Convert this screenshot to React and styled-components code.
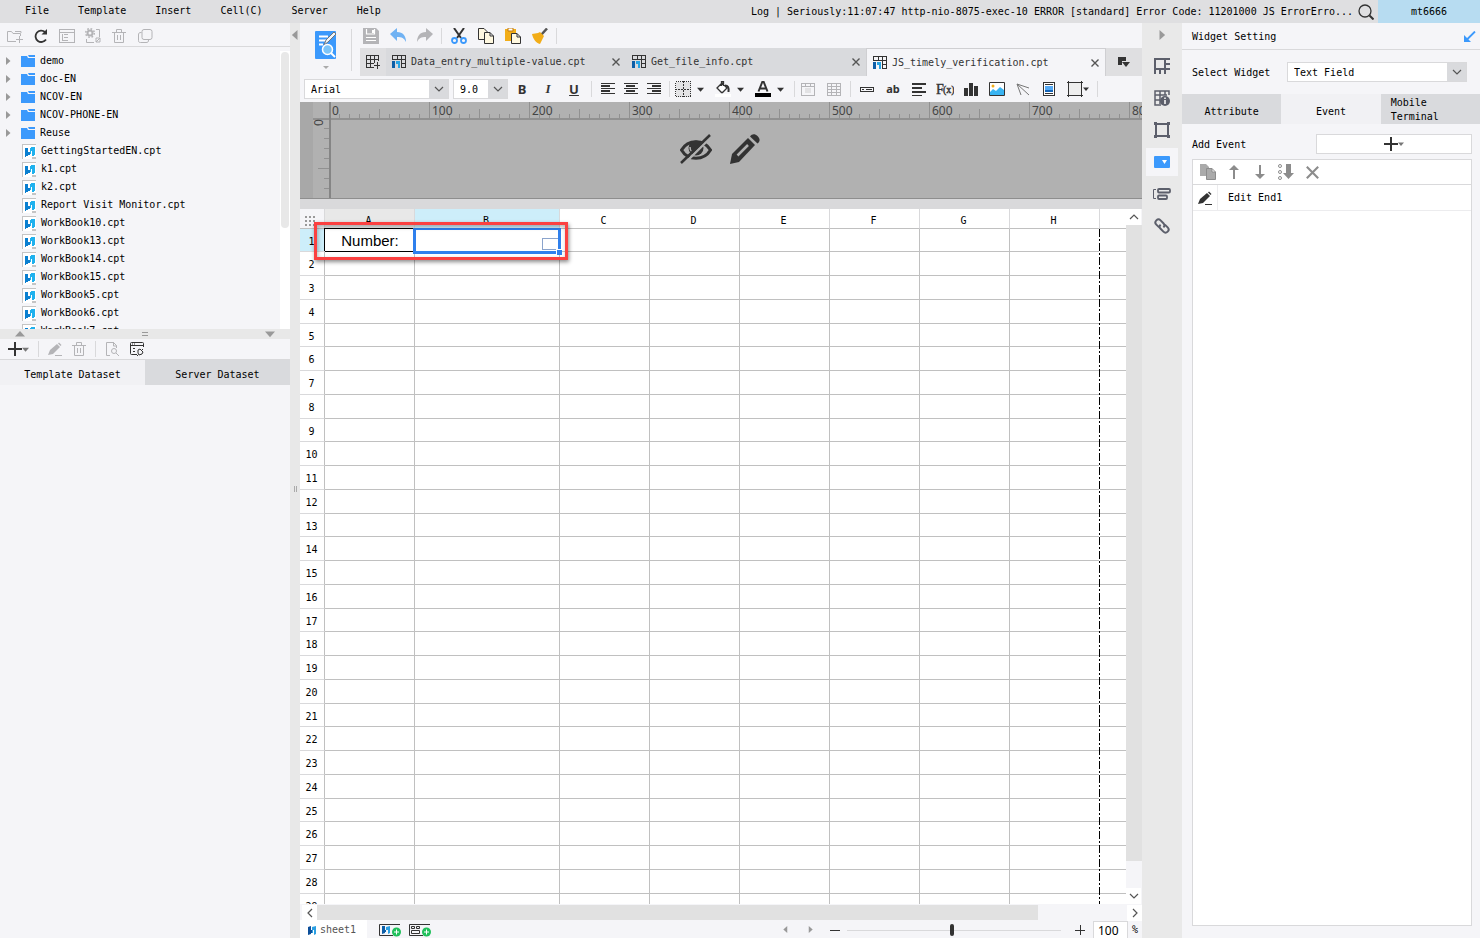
import React from 'react';

import styled, { createGlobalStyle, css } from 'styled-components';

const mono = '"DejaVu Sans Mono", "Liberation Mono", monospace';
const sans = '"Noto Sans", "Open Sans", sans-serif';

const panel = '#f5f5f8';
const bar = '#dfdfe1';
const line = '#d9d9db';
const tab = '#d9dadd';
const ink = '#333';
const blue = '#3b99fc';

const GlobalStyle = createGlobalStyle`
  * {
    box-sizing: border-box;
  }
  body {
    margin: 0;
    font: 10px/18px ${mono};
    color: #000;
    background: ${panel};
  }
  button, input, select {
    margin: 0;
    padding: 0;
    border: 0;
    border-radius: 0;
    background: none;
    font: inherit;
    color: inherit;
    outline: none;
  }
  svg {
    display: block;
    flex: none;
  }
`;

const Page = styled.div`
  height: 100vh;
  display: flex;
  flex-direction: column;
  overflow: hidden;
`;

const Header = styled.header`
  height: 23px;
  flex: none;
  display: flex;
  background: ${bar};
`;

const Menu = styled.nav`
  display: flex;
  gap: 29px;
  padding-left: 25px;
  height: 21px;
`;

const Log = styled.div`
  flex: 1;
  min-width: 0;
  padding-right: 5px;
  line-height: 23px;
  text-align: right;
  white-space: nowrap;
  overflow: hidden;
`;

const SearchButton = styled.button`
  width: 20px;
`;

const User = styled.button`
  width: 102px;
  background: #b7dcf1;
`;

const Body = styled.div`
  flex: 1;
  min-height: 0;
  display: flex;
`;

const Left = styled.aside`
  width: 290px;
  flex: none;
  display: flex;
  flex-direction: column;
  background: ${panel};
`;

const LeftTools = styled.div`
  height: 24px;
  flex: none;
  display: flex;
  align-items: center;
  padding: 2px 0 0 2px;
  border-bottom: 1px solid ${line};
`;

const IconButton = styled.button`
  width: ${props => props.$w || 26}px;
  height: 20px;
  flex: none;
  display: flex;
  align-items: center;
  align-self: center;
  justify-content: center;
`;

const TreeWrap = styled.div`
  height: 282px;
  flex: none;
  display: flex;
  overflow: hidden;
`;

const Tree = styled.ul`
  flex: 1;
  margin: 0;
  padding: 5px 0 0 4px;
  list-style: none;
`;

const TreeRow = styled.li`
  height: 18px;
  display: flex;
  align-items: center;
  gap: 5px;
  white-space: nowrap;
`;

const TreeArrow = styled.span`
  width: 12px;
  height: 9px;
`;

const TreeTrack = styled.div`
  width: 10px;
  margin-top: 4px;
  padding: 1px;
  background: #fff;
`;

const TreeThumb = styled.div`
  height: 176px;
  border-radius: 4px;
  background: #e8e8e8;
`;

const HSplit = styled.div`
  height: 10px;
  flex: none;
  display: flex;
  align-items: center;
  justify-content: space-between;
  padding: 0 15px;
  background: #e8e8e8;
`;

const DataTools = styled.div`
  height: 21px;
  flex: none;
  display: flex;
  align-items: center;
  padding-left: 3px;
  border-bottom: 1px solid ${line};
`;

const Tabs = styled.div`
  display: grid;
  grid-auto-flow: column;
  grid-auto-columns: minmax(0, 1fr);
  flex: none;
  height: ${props => props.$h}px;
`;

const Tab = styled.button`
  padding: ${props => props.$wrap ? '2px 20px 0 10px' : '4px 0 0'};
  line-height: ${props => props.$wrap ? 14 : 15}px;
  text-align: ${props => props.$wrap ? 'left' : 'center'};
  background: ${props => props.$active ? '#f1f1f4' : tab};
`;

const VSplit = styled.div`
  width: 10px;
  flex: none;
  display: flex;
  flex-direction: column;
  align-items: center;
  padding-top: 7px;
  background: #e8e8e8;
`;

const Grip = styled.div`
  width: 3px;
  height: 6px;
  margin: auto;
  border: solid #aaa;
  border-width: 0 1px;
`;

const Center = styled.main`
  flex: 1;
  min-width: 0;
  display: flex;
  flex-direction: column;
  background: ${panel};
`;

const Top = styled.div`
  height: 53px;
  flex: none;
  display: flex;
`;

const Logo = styled.button`
  width: 52px;
  height: 42px;
  margin: 6px 5px 0 0;
  padding-left: 14px;
  border-right: 1px solid ${line};
`;

const TopMain = styled.div`
  flex: 1;
  min-width: 0;
  display: flex;
  flex-direction: column;
`;

const MainTools = styled.div`
  height: 25px;
  display: flex;
  align-items: center;
`;

const Divider = styled.span`
  width: 1px;
  height: 16px;
  flex: none;
  margin: 0 ${props => props.$gap || 0}px;
  background: ${line};
`;

const FileTabs = styled.div`
  height: 28px;
  display: flex;
  margin-left: 3px;
  background: ${bar};
`;

const FileTab = styled.div`
  width: 240px;
  min-width: 0;
  display: flex;
  align-items: center;
  gap: 5px;
  padding: 0 6px;
  color: ${ink};
  background: ${props => props.$active ? panel : tab};
  ${props => props.$active && css`
    border: solid #cfcfd2;
    border-width: 1px 1px 0;
  `}
`;

const FileName = styled.span`
  flex: 1;
  white-space: nowrap;
`;

const FormatBar = styled.div`
  height: 26px;
  flex: none;
  display: flex;
  align-items: center;
  padding-left: 4px;
  overflow: hidden;
`;

const SelectBox = styled.div`
  width: ${props => props.$w}px;
  height: 20px;
  flex: none;
  display: grid;
  margin-right: ${props => props.$mr || 0}px;
  border: 1px solid ${line};
  background: #fff;
  select {
    grid-area: 1 / 1;
    width: 100%;
    padding: 1px 20px 0 6px;
    line-height: 17px;
    appearance: none;
  }
  span {
    grid-area: 1 / 1;
    justify-self: end;
    width: 19px;
    display: grid;
    place-items: center;
    background: ${tab};
    pointer-events: none;
  }
`;

const Letter = styled(IconButton)`
  font: bold ${props => props.$small ? 11 : 13}px/18px ${sans};
  color: ${ink};
  text-decoration: ${props => props.$under ? 'underline' : 'none'};
  ${props => props.$italic && css`
    font-family: "Liberation Serif", serif;
    font-style: italic;
  `}
`;

const SplitButton = styled.button`
  width: ${props => props.$tight ? 35 : 40}px;
  flex: none;
  display: flex;
  align-items: center;
  gap: ${props => props.$tight ? 0 : 6}px;
  padding-left: ${props => props.$tight ? 5 : 1}px;
`;

const Design = styled.div`
  height: 97px;
  flex: none;
  display: grid;
  background: #b1b1b1;
  border-bottom: 1px solid #8e8e8e;
  > * {
    grid-area: 1 / 1;
  }
`;

const DesignActions = styled.div`
  display: flex;
  align-items: center;
  justify-content: center;
  gap: 18px;
  padding: 0 2px 2px 0;
`;

const Band = styled.div`
  height: 10px;
  flex: none;
  background: #d9d9db;
`;

const SheetArea = styled.div`
  flex: 1;
  min-height: 0;
  display: flex;
`;

const SheetView = styled.div`
  position: relative;
  flex: 1;
  min-width: 0;
  overflow: hidden;
  background: #fff;
`;

const Sheet = styled.table`
  width: 100%;
  table-layout: fixed;
  border-collapse: separate;
  border-spacing: 0;
  th, td {
    padding: 0;
    font-weight: normal;
    border: solid #c0c0c0;
    border-width: 0 1px 1px 0;
  }
  th:last-child, td:last-child {
    border-right: 0;
  }
`;

const Row = styled.tr`
  height: ${props => props.$h}px;
`;

const ColHead = styled.th`
  height: 20px;
  line-height: 15px;
  background: ${props => props.$bg || '#fff'};
  && {
    border-right-color: ${line};
    padding: 4px 2px 0 0;
  }
`;

const RowHead = styled.th`
  background: ${props => props.$bg || '#fff'};
  && {
    border-bottom-color: ${line};
    padding: 3px 1px 0 0;
  }
`;

const NumberCell = styled.td`
  font: 15px/18px "Liberation Sans", Arial, sans-serif;
  text-align: center;
  box-shadow: -1px -1px 0 #000;
  && {
    padding: 2px 0 0 1px;
    border-color: #000;
  }
`;

const SelectedCell = styled.td`
  position: relative;
`;

const Selection = styled.div`
  position: absolute;
  inset: -1px -2px -3px -2px;
  border: 3px solid #2f80ed;
  border-width: 2px 3px 3px 3px;
  &::before {
    content: '';
    position: absolute;
    right: 0;
    top: 8px;
    width: 15px;
    height: 10px;
    border: 1px solid #8ba4cc;
    border-right: 0;
  }
  &::after {
    content: '';
    position: absolute;
    right: -4px;
    bottom: -4px;
    width: 5px;
    height: 5px;
    background: #2f80ed;
    box-shadow: -1px -1px 0 #fff;
  }
`;

const PageBreak = styled.div`
  position: absolute;
  top: 20px;
  bottom: 0;
  left: 799px;
  width: 1px;
  background: repeating-linear-gradient(#000 0 8px, #fff 8px 10px, #000 10px 12px, #fff 12px 14px);
`;

const Callout = styled.div`
  position: absolute;
  top: 13px;
  left: 14px;
  width: 254px;
  height: 38px;
  border: 3px solid #fb4040;
  box-shadow: 1px 2px 4px rgba(0, 0, 0, 0.45), inset 1px 2px 4px rgba(0, 0, 0, 0.3);
`;

const VScroll = styled.div`
  width: 16px;
  flex: none;
  display: flex;
  flex-direction: column;
`;

const HScroll = styled.div`
  height: 16px;
  flex: none;
  display: flex;
  padding: 1px 0 0 2px;
`;

const ScrollButton = styled.button`
  width: 15px;
  height: 16px;
  flex: none;
  display: grid;
  place-items: center;
  background: #fff;
`;

const ScrollTrack = styled.div`
  flex: 1;
  display: flex;
  flex-direction: ${props => props.$vertical ? 'column' : 'row'};
  &::before {
    content: '';
    flex: 0 0 ${props => props.$size}%;
    background: #e1e1e1;
  }
`;

const StatusBar = styled.footer`
  height: 18px;
  flex: none;
  display: flex;
  align-items: center;
`;

const SheetTab = styled.button`
  width: 67px;
  height: 18px;
  margin-right: 12px;
  padding: 2px 0 0 8px;
  display: flex;
  align-items: center;
  gap: 4px;
  color: #555;
  background: #fff;
`;

const AddSheet = styled.button`
  width: 30px;
  padding-top: 2px;
`;

const Zoom = styled.div`
  display: flex;
  align-items: center;
  margin-left: auto;
`;

const Range = styled.input`
  width: 214px;
  height: 18px;
  margin: 2px 8px 0 0;
  appearance: none;
  background: linear-gradient(${line}, ${line}) center / 100% 1px no-repeat;
  &::-webkit-slider-thumb {
    appearance: none;
    width: 4px;
    height: 12px;
    border-radius: 2px;
    background: ${ink};
  }
`;

const ZoomValue = styled.input`
  width: 35px;
  height: 18px;
  margin: 2px 4px 0 2px;
  padding-left: 4px;
  font: 12px/16px ${sans};
  border: 1px solid ${line};
  background: #fff;
`;

const Percent = styled.label`
  width: 10px;
  padding-top: 2px;
`;

const Strip = styled.nav`
  width: 40px;
  flex: none;
  display: flex;
  flex-direction: column;
  align-items: center;
  gap: 4px;
  padding-top: 5px;
  background: #e9e9e9;
`;

const StripButton = styled.button`
  width: 32px;
  height: ${props => props.$small ? 14 : 28}px;
  margin-bottom: ${props => props.$small ? 6 : 0}px;
  display: grid;
  place-items: center;
  background: ${props => props.$active ? panel : 'none'};
`;

const Right = styled.aside`
  width: 298px;
  flex: none;
  display: flex;
  flex-direction: column;
  background: ${panel};
`;

const PanelTitle = styled.div`
  height: 27px;
  flex: none;
  display: flex;
  align-items: center;
  justify-content: space-between;
  padding: 2px 4px 0 10px;
  border-bottom: 1px solid ${line};
`;

const Field = styled.div`
  height: ${props => props.$h}px;
  flex: none;
  display: flex;
  align-items: center;
  justify-content: space-between;
  padding: ${props => props.$pt || 0}px ${props => props.$pr}px 0 10px;
  label {
    padding-top: 2px;
  }
`;

const AddButton = styled.button`
  width: 156px;
  height: 20px;
  display: flex;
  align-items: center;
  justify-content: center;
  border: 1px solid ${line};
  background: #fff;
`;

const EventList = styled.div`
  flex: 1;
  margin: 0 8px 12px 10px;
  border: 1px solid ${line};
  background: #fff;
`;

const EventTools = styled.div`
  height: 25px;
  display: flex;
  align-items: center;
  padding-left: 2px;
  border-bottom: 1px solid ${line};
`;

const EventRow = styled.div`
  height: 26px;
  display: flex;
  align-items: center;
  border-bottom: 1px solid #ececee;
`;

const EventName = styled.span`
  flex: 1;
  padding-left: 10px;
  line-height: 25px;
  border-left: 1px solid #ececee;
`;

const Icon = ({ w = 16, h = w, box, color = ink, children, crisp }) => (
  <svg
    width={w}
    height={h}
    viewBox={box || `0 0 ${w} ${h}`}
    fill="none"
    stroke={color}
    shapeRendering={crisp ? 'crispEdges' : 'auto'}
    aria-hidden="true"
  >
    {children}
  </svg>
);

const Caret = ({ color = ink, w = 7, dir = 'down' }) => {
  const turn = { down: 0, left: 90, up: 180, right: 270 }[dir];
  return (
    <Icon w={w} box="0 0 8 8">
      <path d="M0 2h8L4 6.500z" fill={color} stroke="none" transform={`rotate(${turn} 4 4)`} />
    </Icon>
  );
};

const Chevron = ({ dir = 'down' }) => {
  const turn = { down: 0, left: 90, up: 180, right: 270 }[dir];
  return (
    <Icon w={10} color="#555">
      <path d="M1 3l4 4 4-4" strokeWidth="1.200" transform={`rotate(${turn} 5 5)`} />
    </Icon>
  );
};

const Folder = () => (
  <Icon w={14} h={12}>
    <path d="M0 1h6l1 2h7v9H0z" fill={blue} stroke="none" />
    <path d="M7 0h7v2H8z" fill={blue} stroke="none" />
  </Icon>
);

const Mark = ({ w = 8, h = 9 }) => (
  <Icon w={w} h={h}>
    <path d="M0 1l3-1v4h1v3H3v1L0 9z" fill="#0d4f9a" stroke="none" />
    <path d="M4 1l4-1v8l-2 1V4H5v3H4z" fill="#2b9fe2" stroke="none" />
  </Icon>
);

const Report = () => (
  <Icon w={15} h={15} crisp>
    <path d="M1 0h14v15H1z" fill="#fff" stroke="none" />
    <path d="M1.500 15V.5H15" stroke="#c4c4c4" />
    <path d="M11 13h4v2h-4z" fill="#c4c4c4" stroke="none" />
    <path d="M4 4h3v4h2v3H7v1H5v1H4z" fill="#0a7fd0" stroke="none" />
    <path d="M9 4h1V3h4v8h-1v1h-2V7h-1v3H9z" fill="#1fb1ee" stroke="none" />
  </Icon>
);

const FileIcon = () => (
  <Icon w={14} h={14} crisp>
    <path d="M.5 5V.5h13v12H9M.5 4.500h13M5.500 0v4M9.500 0v13M9 8.500h4" />
    <path d="M0 6h3v7H0z" fill="#0d5ea8" stroke="none" />
    <path d="M4 6h4v7H6V9H4z" fill="#27a4e4" stroke="none" />
  </Icon>
);

const Trash = ({ color = '#b4b4b7' }) => (
  <Icon w={14} color={color}>
    <path d="M0 3.500h14M4.500 3V.500h5V3M2.500 4v9.500h9V4M5.500 6v5M8.500 6v5" />
  </Icon>
);

const Plus = ({ w = 14 }) => (
  <Icon w={w} box="0 0 14 14" crisp>
    <path d="M7 0v14M0 7h14" strokeWidth="2" />
  </Icon>
);

const Pen = ({ color = ink }) => (
  <Icon w={14} color={color}>
    <path d="M0 13l2-5 7-6 3 3-7 7z" fill={color} stroke="none" />
    <path d="M10 1.500l1-1 2.500 2.500-1 1z" fill={color} stroke="none" />
    <path d="M7 13.500h7" />
  </Icon>
);

const Lines = ({ mode }) => {
  const x = { left: 0, center: 2, right: 5 }[mode];
  return (
    <Icon w={14} h={12} crisp>
      <path d={`M0 .5h14M${x} 3h9M0 5.500h14M${x} 8h9M0 10.500h14`} strokeWidth="1.200" />
    </Icon>
  );
};

const Cross = ({ w = 8, color = '#555', weight = 1.4 }) => (
  <Icon w={w} box="0 0 8 8" color={color}>
    <path d="M.5.5l7 7M7.500.5l-7 7" strokeWidth={weight} />
  </Icon>
);

const folders = ['demo', 'doc-EN', 'NCOV-EN', 'NCOV-PHONE-EN', 'Reuse'];
const files = [
  'GettingStartedEN', 'k1', 'k2', 'Report Visit Monitor', 'WorkBook10', 'WorkBook13',
  'WorkBook14', 'WorkBook15', 'WorkBook5', 'WorkBook6', 'WorkBook7',
];
const menus = ['File', 'Template', 'Insert', 'Cell(C)', 'Server', 'Help'];
const templates = ['Data_entry_multiple-value.cpt', 'Get_file_info.cpt', 'JS_timely_verification.cpt'];
const columns = ['A', 'B', 'C', 'D', 'E', 'F', 'G', 'H', ''];
const rows = Array.from({ length: 29 }, (_, i) => i + 1);
const ticks = Array.from({ length: 90 }, (_, i) => i);

const pale = '#b4b4b7';
const gray = '#8c8c8c';
const slate = '#5c5f6b';

const LeftPanel = () => (
  <Left>
    <LeftTools>
      <IconButton aria-label="New folder">
        <Icon w={16} h={14} color={pale}>
          <path d="M9 12.500H.5v-10h4L6 4.500h7.500V7M8 2.500h6V4M12.500 7v7M9 10.500h7" />
        </Icon>
      </IconButton>
      <IconButton aria-label="Refresh">
        <Icon w={14}>
          <path d="M12 10.500A5.700 5.700 0 1 1 11 3" strokeWidth="1.800" />
          <path d="M13 0v5.500H7.500z" fill={ink} stroke="none" />
        </Icon>
      </IconButton>
      <IconButton aria-label="Locate">
        <Icon w={16} h={14} color={pale} crisp>
          <path d="M.5.5h15v13H.5zM0 3.500h16M3.500 5v7M5 5.500h4M5 8.500h4M3 11.500h6" />
        </Icon>
      </IconButton>
      <IconButton aria-label="Settings">
        <Icon w={16} h={15} color={pale}>
          <circle cx="5" cy="5" r="2.500" strokeWidth="2" />
          <circle cx="5" cy="5" r="4.300" strokeWidth="1.500" strokeDasharray="1.700 1.680" />
          <path d="M11 1.500h3.500V9M1.500 11v3.500H9M11 10h4v4h-4zM11 14l4-4" />
        </Icon>
      </IconButton>
      <IconButton aria-label="Delete"><Trash /></IconButton>
      <IconButton aria-label="Copy">
        <Icon w={15} h={14} color={pale}>
          <rect x="4" y=".5" width="10" height="10" rx="2" />
          <path d="M3.500 3.500C1 3.500.5 4 .5 6v5.500c0 1.500.5 2 2 2H8c2 0 2.500-.5 2.500-2.500" />
        </Icon>
      </IconButton>
    </LeftTools>
    <TreeWrap>
      <Tree>
        {folders.map(name => (
          <TreeRow key={name}>
            <TreeArrow><Caret dir="right" w={8} color="#999" /></TreeArrow>
            <Folder />
            {name}
          </TreeRow>
        ))}
        {files.map(name => (
          <TreeRow key={name}>
            <TreeArrow />
            <Report />
            {name}.cpt
          </TreeRow>
        ))}
      </Tree>
      <TreeTrack><TreeThumb /></TreeTrack>
    </TreeWrap>
    <HSplit>
      <Caret dir="up" w={10} color="#999" />
      <Icon w={6} h={4} color="#999" crisp><path d="M0 .5h6M0 3.500h6" /></Icon>
      <Caret w={10} color="#999" />
    </HSplit>
    <DataTools>
      <IconButton $w={30} aria-label="Add dataset"><Plus /><Caret w={7} color="#777" /></IconButton>
      <Divider $gap={5} />
      <IconButton aria-label="Edit dataset" $w={22}><Pen color={pale} /></IconButton>
      <IconButton aria-label="Delete dataset"><Trash /></IconButton>
      <Divider $gap={3} />
      <IconButton aria-label="Preview">
        <Icon w={13} h={14} color={pale}>
          <path d="M4 13.500H.5V.5h7l3 3V6M7.500 0v4H11" />
          <circle cx="8" cy="9" r="2.500" />
          <path d="M10 11l3 3" />
        </Icon>
      </IconButton>
      <IconButton aria-label="Connection" $w={24}>
        <Icon w={15} h={14}>
          <path d="M7 12.500H1.500a1 1 0 0 1-1-1v-10a1 1 0 0 1 1-1h11a1 1 0 0 1 1 1V5M0 3.500h14M3 6.500h2M3 9.500h2M2 2h1M4 2h1" />
          <path d="M8 8l2-1 3 3-1 2-3 1-1-2zM13 7l-2 2M8 13l-1 1" />
        </Icon>
      </IconButton>
    </DataTools>
    <Tabs $h={25}>
      <Tab $active>Template Dataset</Tab>
      <Tab>Server Dataset</Tab>
    </Tabs>
  </Left>
);

const Toolbar = () => (
  <Top>
    <Logo aria-label="Preview template">
      <Icon w={24} h={40}>
        <rect x="1" y="1" width="21" height="28" rx="1" fill={blue} stroke="none" />
        <path d="M5 6.500h9M5 10.500h7M5 14.500h4" stroke="#fff" strokeWidth="2" />
        <path d="M10 15l2-5 8-8 2 2-8 8z" fill="#eef5fc" stroke="#777" />
        <circle cx="13.500" cy="19.500" r="5" fill="#7cc4f8" stroke="#fff" strokeWidth="1.500" />
        <path d="M17 23l4 4" stroke="#fff" strokeWidth="2" />
        <path d="M9 36h6l-3 3z" fill="#aaa" stroke="none" />
      </Icon>
    </Logo>
    <TopMain>
      <MainTools>
        <IconButton $w={27} aria-label="Save">
          <Icon>
            <path d="M0 0h13l3 3v13H0z" fill={pale} stroke="none" />
            <path d="M3.500 1v5h8V1M3 9.500h10M3 12.500h10" stroke="#fff" strokeWidth="1.200" />
            <path d="M9 2h2v3H9z" fill="#fff" stroke="none" />
          </Icon>
        </IconButton>
        <IconButton $w={27} aria-label="Undo">
          <Icon><path d="M0 6l7-6v4c6 0 9 4 9 10-2-4-4-5-9-5v4z" fill="#70b2f3" stroke="none" /></Icon>
        </IconButton>
        <IconButton $w={27} aria-label="Redo">
          <Icon><path d="M16 6L9 0v4C3 4 0 8 0 14c2-4 4-5 9-5v4z" fill={pale} stroke="none" /></Icon>
        </IconButton>
        <Divider $gap={3} />
        <IconButton $w={27} aria-label="Cut">
          <Icon>
            <path d="M3 0l7 10M13 0L6 10" strokeWidth="2" />
            <circle cx="3.500" cy="12.500" r="2.500" stroke={blue} strokeWidth="1.800" />
            <circle cx="12.500" cy="12.500" r="2.500" stroke={blue} strokeWidth="1.800" />
          </Icon>
        </IconButton>
        <IconButton $w={27} aria-label="Copy">
          <Icon>
            <path d="M.5.5H6L9.500 4v7.500h-9z" fill="#fff8e0" />
            <path d="M6.500 4.500H12l3.500 3.500v7.500h-9zM12 4.500V8h3.500" fill="#fff8e0" />
          </Icon>
        </IconButton>
        <IconButton $w={27} aria-label="Paste">
          <Icon>
            <path d="M0 1h11v12H0z" fill="#f2ad18" stroke="none" />
            <path d="M3 0h5v3H3z" fill="#fff" stroke="#c07a10" />
            <path d="M6.500 5.500H12L15.500 9v6.500h-9zM12 5.500V9h3.500" fill="#fff8e0" />
          </Icon>
        </IconButton>
        <IconButton $w={27} aria-label="Format painter">
          <Icon>
            <path d="M9.500 6.500l5.500-6" strokeWidth="2.500" stroke="#555" />
            <path d="M0 6l6-1 2-1 4 4-1 2-3 6C4 15 1 11 0 6z" fill="#f2ad18" stroke="none" />
          </Icon>
        </IconButton>
        <Divider $gap={3} />
      </MainTools>
      <FileTabs>
        <IconButton aria-label="New template">
          <Icon w={14} h={14} crisp>
            <path d="M8 12.500H.5V.5h12V6M0 4.500h13M0 8.500h8M4.500 0v13M8.500 0v8M11.500 7v7M8 10.500h7" />
          </Icon>
        </IconButton>
        {templates.map((name, i) => (
          <FileTab key={name} $active={i === 2}>
            <FileIcon />
            <FileName>{name}</FileName>
            <button aria-label={`Close ${name}`}><Cross /></button>
          </FileTab>
        ))}
        <IconButton $w={36} aria-label="All templates">
          <Icon w={12} h={10}>
            <path d="M0 0h8v4H4v4H0z" fill={ink} stroke="none" />
            <path d="M4 5h8L8 10z" fill={ink} stroke="none" />
          </Icon>
        </IconButton>
      </FileTabs>
    </TopMain>
  </Top>
);

const Format = () => (
  <FormatBar>
    <SelectBox $w={145} $mr={4}>
      <select aria-label="Font"><option>Arial</option></select>
      <span><Chevron /></span>
    </SelectBox>
    <SelectBox $w={55} $mr={1}>
      <select aria-label="Font size"><option>9.0</option></select>
      <span><Chevron /></span>
    </SelectBox>
    <Letter>B</Letter>
    <Letter $italic>I</Letter>
    <Letter $under>U</Letter>
    <Divider $gap={4} />
    <IconButton $w={23} aria-label="Align left"><Lines mode="left" /></IconButton>
    <IconButton $w={23} aria-label="Align center"><Lines mode="center" /></IconButton>
    <IconButton $w={23} aria-label="Align right"><Lines mode="right" /></IconButton>
    <Divider $gap={4} />
    <SplitButton aria-label="Borders">
      <Icon crisp>
        <path d="M.5.5h15v15H.5z" fill="#e4e4e6" strokeDasharray="1 1" />
        <path d="M8 0v16M0 8h16" strokeDasharray="2 1" />
      </Icon>
      <Caret />
    </SplitButton>
    <SplitButton aria-label="Fill color">
      <Icon>
        <path d="M0 13h16v3H0z" fill="#fff" stroke="none" />
        <path d="M2 7l5-5 5 5-4.500 4.500h-1zM6.500 5V.500h2V5" fill="#fff" strokeWidth="1.300" />
        <path d="M10 4.500c3 0 4 2 3.500 6.500" strokeWidth="2" />
      </Icon>
      <Caret />
    </SplitButton>
    <SplitButton aria-label="Font color">
      <Icon>
        <path d="M0 12h16v4H0z" fill="#000" stroke="none" />
        <path d="M3.500 10.500L7.300 1h1.400l3.800 9.500M5 7.500h6" strokeWidth="2" />
      </Icon>
      <Caret />
    </SplitButton>
    <Divider />
    <IconButton aria-label="Merge">
      <Icon w={14} h={13} color={pale} crisp>
        <path d="M.5.5h13v12H.5zM0 3.500h14M4.500 0v4M9.500 0v4" />
        <path d="M4 5h6v5H4z" fill="#e2e2e4" stroke="none" />
      </Icon>
    </IconButton>
    <IconButton aria-label="Unmerge">
      <Icon w={14} h={13} color={pale} crisp>
        <path d="M.5.5h13v12H.5zM0 3.500h14M0 6.500h14M0 9.500h14M4.500 0v13M9.500 0v13" />
      </Icon>
    </IconButton>
    <Divider $gap={3} />
    <IconButton aria-label="Text field">
      <Icon w={14} h={5} crisp><path d="M.5.5h13v4H.5zM2 2.500h2M6 2.500h6" /></Icon>
    </IconButton>
    <Letter $small>ab</Letter>
    <IconButton aria-label="Rich text">
      <Icon w={14} crisp><path d="M0 2h14M0 6h10M0 10h14M0 14h10" strokeWidth="2" /></Icon>
    </IconButton>
    <IconButton aria-label="Formula">
      <Icon w={18} h={16}>
        <text x="0" y="13" fontSize="14" fontFamily="Liberation Serif" fill={ink} strokeWidth=".4">F</text>
        <text x="7" y="12" fontSize="10" fontFamily="Liberation Serif" fill={ink} strokeWidth=".4">(x)</text>
      </Icon>
    </IconButton>
    <IconButton aria-label="Chart">
      <Icon w={14} h={13}><path d="M0 5h4v8H0zM5 0h4v13H5zM10 3h4v10h-4z" fill={ink} stroke="none" /></Icon>
    </IconButton>
    <IconButton aria-label="Image">
      <Icon w={16} h={14}>
        <path d="M.5.5h15v13H.5z" fill="#fff" />
        <path d="M1 10l3-3 3 2 4-4 4 3v5H1z" fill="#39b4f2" stroke="none" />
        <circle cx="4" cy="4" r="1.500" fill="#f2ad18" stroke="none" />
      </Icon>
    </IconButton>
    <IconButton aria-label="Slope line">
      <Icon w={14} h={13} color="#777"><path d="M5 12L1 1l12 11M1 1l12 4" /></Icon>
    </IconButton>
    <IconButton aria-label="Sub report">
      <Icon w={12} h={14} crisp>
        <path d="M.5.5h11v13H.5z" fill="#fff" />
        <path d="M2 2.500h8M2 11.500h8" />
        <path d="M2 4h8v6H2z" fill="#55aaf5" stroke="none" />
        <path d="M2 8h8v2H2z" fill="#1565b8" stroke="none" />
      </Icon>
    </IconButton>
    <SplitButton $tight aria-label="Shape">
      <Icon crisp>
        <path d="M1.500 0v16M14.500 0v16M0 1.500h16M0 14.500h16" />
        <path d="M2 2h12v12H2z" fill="#eee" stroke="none" />
      </Icon>
      <Caret w={6} />
    </SplitButton>
    <Divider />
  </FormatBar>
);

const Ruler = () => (
  <Design>
    <svg width="100%" height="96" shapeRendering="crispEdges">
      <path d="M0 0h13v96H0z" fill="#a8a8a8" />
      {ticks.map(i => {
        const top = i % 10 === 0 ? 0 : i % 5 === 0 ? 7 : 12;
        return <path key={i} d={`M${29 + i * 10} ${top}h1V17h-1z`} fill="#919191" />;
      })}
      {ticks.slice(1, 8).map(i => (
        <path key={i} d={`M29 ${16 + i * 10}v1H${i % 5 === 0 ? 18 : 24}v-1z`} fill="#919191" />
      ))}
      <path d="M13 16h3000v2H13z" fill="#919191" />
      <path d="M29 0h2v96h-2z" fill="#858585" />
      {ticks.filter(i => i % 10 === 0).map(i => (
        <text key={i} x={32 + i * 10} y="13" fontSize="12" fontFamily="Noto Sans" fill="#444">{i * 10}</text>
      ))}
      <text x="-24" y="23" fontSize="12" fontFamily="Noto Sans" fill="#444" transform="rotate(-90)">0</text>
    </svg>
    <DesignActions>
      <button aria-label="Hide">
        <Icon w={32} h={30}>
          <path d="M1.500 16C8 5 24 5 30.500 16 24 27 8 27 1.500 16z" strokeWidth="3" />
          <circle cx="16" cy="14" r="7.500" fill={ink} stroke="none" />
          <path d="M10 13c0 2 .5 4 2 5" stroke="#b1b1b1" strokeWidth="1.500" />
          <path d="M3 31L33 1" stroke="#b1b1b1" strokeWidth="2.500" />
          <path d="M1 29L30 1" strokeWidth="2.500" />
        </Icon>
      </button>
      <button aria-label="Edit">
        <Icon w={30}>
          <path d="M0 30l2-10L18 4l7 7L9 28z" fill={ink} stroke="none" />
          <path d="M20 2.500c2-3 5-3 7.500-.5s3 5 0 7.500z" fill={ink} stroke="none" />
          <path d="M7.500 21.500L18 11" stroke="#b1b1b1" strokeWidth="2.500" />
        </Icon>
      </button>
    </DesignActions>
  </Design>
);

const SheetGrid = () => (
  <SheetArea>
    <SheetView>
      <Sheet>
        <colgroup>
          <col width="25" />
          {columns.map((name, i) => <col key={i} width={name === 'B' ? 145 : name ? 90 : undefined} />)}
        </colgroup>
        <thead>
          <tr>
            <ColHead $bg={panel} aria-label="Select all">
              <Icon w={20} h={10} crisp>
                <path d="M5 1h10M5 5h10M5 9h10" stroke="#999" strokeWidth="2" strokeDasharray="2 2" />
              </Icon>
            </ColHead>
            {columns.map((name, i) => (
              <ColHead key={i} $bg={{ A: '#e8e8e8', B: '#cdeefa' }[name]}>{name}</ColHead>
            ))}
          </tr>
        </thead>
        <tbody>
          {rows.map(n => (
            <Row key={n} $h={n % 4 === 1 ? 23 : 24}>
              <RowHead $bg={n === 1 ? '#cdeefa' : undefined}>{n}</RowHead>
              {columns.map((name, i) => {
                if (n === 1 && name === 'A') return <NumberCell key={i}>Number:</NumberCell>;
                if (n === 1 && name === 'B') return <SelectedCell key={i}><Selection /></SelectedCell>;
                return <td key={i} />;
              })}
            </Row>
          ))}
        </tbody>
      </Sheet>
      <PageBreak />
      <Callout />
    </SheetView>
    <VScroll>
      <ScrollButton aria-label="Scroll up"><Chevron dir="up" /></ScrollButton>
      <ScrollTrack $vertical $size={96} />
      <ScrollButton aria-label="Scroll down"><Chevron /></ScrollButton>
    </VScroll>
  </SheetArea>
);

const Status = () => (
  <StatusBar>
    <SheetTab><Mark />sheet1</SheetTab>
    <AddSheet aria-label="Add sheet">
      <Icon w={22} h={13}>
        <path d="M21 .5H.5v11H14" />
        <path d="M3 2h3v4h1v2H6v1L3 10z" fill="#0d5ea8" stroke="none" />
        <path d="M7 3l4-1v7L9 10V6H7z" fill="#2b9fe2" stroke="none" />
        <circle cx="17.500" cy="8" r="4.500" fill="#1fc05a" stroke="none" />
        <path d="M17.500 5.500v5M15 8h5" stroke="#fff" />
      </Icon>
    </AddSheet>
    <AddSheet aria-label="Add form">
      <Icon w={22} h={13}>
        <path d="M21 .5H.5v11H14M2.500 2.500h3v2h-3zM7.500 2.500h3v2h-3zM2.500 6.500h8v3h-8z" />
        <circle cx="17.500" cy="8" r="4.500" fill="#1fc05a" stroke="none" />
        <path d="M17.500 5.500v5M15 8h5" stroke="#fff" />
      </Icon>
    </AddSheet>
    <Zoom>
      <IconButton $w={25} aria-label="Previous sheet"><Caret dir="left" color="#999" /></IconButton>
      <IconButton $w={25} aria-label="Next sheet"><Caret dir="right" color="#999" /></IconButton>
      <IconButton $w={24} aria-label="Zoom out"><Icon w={10} crisp><path d="M0 6.500h10" /></Icon></IconButton>
      <Range type="range" min="0" max="100" defaultValue="49" aria-label="Zoom" />
      <IconButton $w={22} aria-label="Zoom in"><Icon w={10} h={11} crisp><path d="M0 6.500h10M5 1v10" /></Icon></IconButton>
      <ZoomValue id="zoom" defaultValue="100" />
      <Percent htmlFor="zoom">%</Percent>
    </Zoom>
  </StatusBar>
);

const SideStrip = () => (
  <Strip>
    <StripButton $small aria-label="Collapse"><Caret dir="right" w={10} color="#999" /></StripButton>
    <StripButton aria-label="Cell element">
      <Icon color={slate} crisp>
        <path d="M1 16V1h10v10H1M11 1h5M11 6h5M11 11h5M6 11v5M11 11v5" strokeWidth="2" />
      </Icon>
    </StripButton>
    <StripButton aria-label="Cell attributes">
      <Icon color={slate}>
        <path d="M7 15H1V1h14v4M1 5h12M6 1v13M1 10h5M11 1v4" strokeWidth="1.500" />
        <circle cx="11" cy="11" r="5" fill={slate} stroke="none" />
        <path d="M11 7.500v1.500M11 10v4" stroke="#fff" strokeWidth="1.500" />
      </Icon>
    </StripButton>
    <StripButton aria-label="Float element">
      <Icon color={slate} crisp>
        <path d="M2 2h12v12H2z" strokeWidth="2" />
        <path d="M0 0h3v3H0zM13 0h3v3h-3zM0 13h3v3H0zM13 13h3v3h-3z" fill={slate} stroke="none" />
      </Icon>
    </StripButton>
    <StripButton $active aria-label="Widget setting">
      <Icon w={16} h={12}>
        <rect width="16" height="12" rx="1" fill={blue} stroke="none" />
        <path d="M8 4h5l-2.500 4z" fill="#fff" stroke="none" />
      </Icon>
    </StripButton>
    <StripButton aria-label="Condition attributes">
      <Icon w={18} h={12} color={slate}>
        <path d="M3 1.500H.5v9H3" />
        <rect x="5" y="1" width="12" height="3.500" rx="1" strokeWidth="1.800" />
        <rect x="5" y="7.500" width="9" height="3.500" rx="1" strokeWidth="1.800" />
      </Icon>
    </StripButton>
    <StripButton aria-label="Hyperlink">
      <Icon color={slate}>
        <g transform="rotate(45 8 8)" strokeWidth="2">
          <path d="M7 11H3a3 3 0 0 1 0-6h4a3 3 0 0 1 3 3" />
          <path d="M9 5h4a3 3 0 0 1 0 6H9a3 3 0 0 1-3-3" />
        </g>
      </Icon>
    </StripButton>
  </Strip>
);

const WidgetPanel = () => (
  <Right>
    <PanelTitle>
      Widget Setting
      <Icon w={12} color={blue}>
        <path d="M11 .5L3 8.500" strokeWidth="1.800" />
        <path d="M0 4v7h7z" fill={blue} stroke="none" />
      </Icon>
    </PanelTitle>
    <Field $h={44} $pr={13}>
      <label htmlFor="widget">Select Widget</label>
      <SelectBox $w={180}>
        <select id="widget"><option>Text Field</option></select>
        <span><Chevron /></span>
      </SelectBox>
    </Field>
    <Tabs $h={30}>
      <Tab>Attribute</Tab>
      <Tab $active>Event</Tab>
      <Tab $wrap>Mobile Terminal</Tab>
    </Tabs>
    <Field $h={35} $pr={8} $pt={4}>
      <label htmlFor="add-event">Add Event</label>
      <AddButton id="add-event"><Plus /><Caret w={6} color="#777" /></AddButton>
    </Field>
    <EventList>
      <EventTools>
        <IconButton aria-label="Copy event">
          <Icon color={gray}>
            <path d="M0 0h6l3 3v9H0z" fill="#aaa" stroke="none" />
            <path d="M6.500 4.500H12L15.500 8v7.500h-9zM12 4.500V8h3.500" fill="#aaa" />
          </Icon>
        </IconButton>
        <IconButton aria-label="Move up">
          <Icon w={10} h={14} color={gray}>
            <path d="M5 14V3" strokeWidth="2" /><path d="M0 5l5-5 5 5z" fill={gray} stroke="none" />
          </Icon>
        </IconButton>
        <IconButton aria-label="Move down">
          <Icon w={10} h={14} color={gray}>
            <path d="M5 0v11" strokeWidth="2" /><path d="M0 9l5 5 5-5z" fill={gray} stroke="none" />
          </Icon>
        </IconButton>
        <IconButton aria-label="Sort">
          <Icon color={gray}>
            <circle cx="2" cy="2" r="1.500" /><circle cx="2" cy="8" r="1.500" /><circle cx="2" cy="14" r="1.500" />
            <path d="M8 0h5v9h3l-5.500 6L5 9h3z" fill={gray} stroke="none" />
          </Icon>
        </IconButton>
        <IconButton aria-label="Delete event"><Cross w={13} color={gray} weight={1.3} /></IconButton>
      </EventTools>
      <EventRow>
        <IconButton $w={24} aria-label="Edit event"><Pen /></IconButton>
        <EventName>Edit End1</EventName>
      </EventRow>
    </EventList>
  </Right>
);

const App = () => (
  <Page>
    <GlobalStyle />
    <Header>
      <Menu>{menus.map(name => <button key={name}>{name}</button>)}</Menu>
      <Log>
        Log | Seriously:11:07:47 http-nio-8075-exec-10 ERROR [standard] Error Code: 11201000 JS ErrorErro...
      </Log>
      <SearchButton aria-label="Search">
        <Icon w={16}>
          <circle cx="7" cy="7" r="6" strokeWidth="1.300" />
          <path d="M11.500 11.500L15.500 15.500" strokeWidth="2" />
        </Icon>
      </SearchButton>
      <User>mt6666</User>
    </Header>
    <Body>
      <LeftPanel />
      <VSplit>
        <Caret dir="left" w={10} color="#999" />
        <Grip />
      </VSplit>
      <Center>
        <Toolbar />
        <Format />
        <Ruler />
        <Band />
        <SheetGrid />
        <HScroll>
          <ScrollButton aria-label="Scroll left"><Chevron dir="left" /></ScrollButton>
          <ScrollTrack $size={89} />
          <ScrollButton aria-label="Scroll right"><Chevron dir="right" /></ScrollButton>
        </HScroll>
        <Status />
      </Center>
      <SideStrip />
      <WidgetPanel />
    </Body>
  </Page>
);

export default App;
